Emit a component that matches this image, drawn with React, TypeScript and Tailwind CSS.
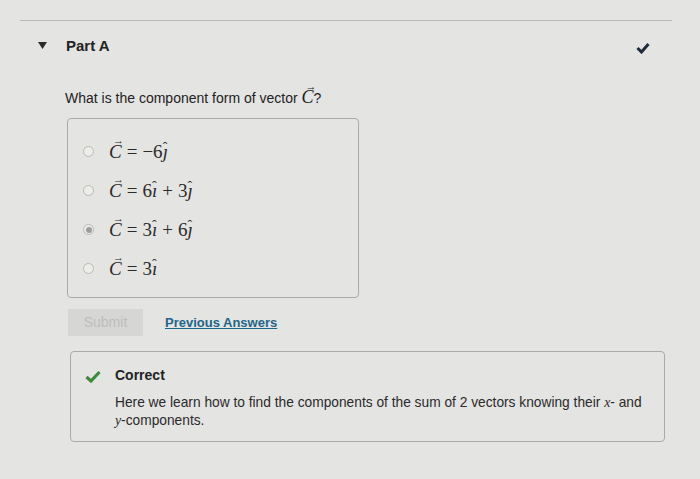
import React from "react";

const serif = { fontFamily: '"Liberation Serif", "DejaVu Serif", serif' };

// Vecteur C avec flèche au-dessus
function VecC() {
  return (
    <span className="relative inline-block italic leading-none">
      C
      <span className="absolute left-[4px] top-[-7px] text-[11px] not-italic leading-none">→</span>
    </span>
  );
}

function Hat({ ch }: { ch: string }) {
  return (
    <span className="relative inline-block italic leading-none">
      {ch}
      <span className="absolute left-[0px] top-[-1px] text-[14px] not-italic leading-none">ˆ</span>
    </span>
  );
}

function Op({ c }: { c: string }) {
  return <span className="mx-[5px]">{c}</span>;
}

function Radio({ checked }: { checked?: boolean }) {
  return (
    <span className="w-[11px] h-[11px] rounded-full border border-[#b9b9b7] bg-[#ecece9] flex items-center justify-center shrink-0">
      {checked && <span className="w-[6px] h-[6px] rounded-full bg-[#9d9d9b]" />}
    </span>
  );
}

const options: { checked?: boolean; expr: React.ReactNode }[] = [
  { expr: <><Op c="=" />−6<Hat ch="ȷ" /></> },
  { expr: <><Op c="=" />6<Hat ch="ı" /><Op c="+" />3<Hat ch="ȷ" /></> },
  { checked: true, expr: <><Op c="=" />3<Hat ch="ı" /><Op c="+" />6<Hat ch="ȷ" /></> },
  { expr: <><Op c="=" />3<Hat ch="ı" /></> },
];

export default function App() {
  return (
    <div
      className="w-[700px] h-[479px] bg-[#e4e4e2] text-[#222] overflow-hidden pt-[20px]"
      style={{ fontFamily: '"Liberation Sans", Arial, sans-serif' }}
    >
      <div className="ml-[20px] w-[652px] border-t border-[#b9b9b7]">
        {/* En-tête */}
        <div className="flex items-center h-[20px] mt-[15px]">
          <svg width="9" height="7" viewBox="0 0 9 7" className="ml-[18px] mt-[-2px]">
            <polygon points="0,0 9,0 4.5,7" fill="#2b2b2b" />
          </svg>
          <span className="ml-[19px] text-[15px] font-bold">Part A</span>
          <svg width="14" height="12" viewBox="0 0 14 12" className="ml-auto mr-[22px] mt-[3px]">
            <polyline points="1.5,6 5.5,10 12.5,2" fill="none" stroke="#1f2b3d" strokeWidth="3" />
          </svg>
        </div>
      </div>

      <div className="ml-[65px] mt-[32px] h-[20px] text-[14px] leading-[20px]">
        What is the component form of vector{" "}
        <span className="text-[18px] leading-none" style={serif}><VecC /></span>?
      </div>

      {/* Choix */}
      <div className="ml-[67px] mt-[10px] w-[292px] h-[180px] border border-[#a9a9a7] rounded-[4px] pt-[13px]">
        {options.map((o, i) => (
          <div key={i} className="flex items-center h-[39px] pl-[15px]">
            <Radio checked={o.checked} />
            <span className="ml-[15px] text-[19px] text-[#2a2a2a] whitespace-nowrap leading-none" style={serif}>
              <VecC />
              {o.expr}
            </span>
          </div>
        ))}
      </div>

      {/* Boutons */}
      <div className="flex items-center ml-[68px] mt-[11px]">
        <div className="w-[75px] h-[27px] bg-[#d6d6d4] text-[#bdbdbb] text-[14px] flex items-center justify-center">
          Submit
        </div>
        <a className="ml-[22px] text-[13px] font-bold text-[#1d6689] underline">Previous Answers</a>
      </div>

      {/* Résultat */}
      <div className="ml-[70px] mt-[15px] w-[595px] h-[91px] border border-[#a9a9a7] rounded-[4px] pt-[13px] pl-[14px] pr-[12px] flex">
        <svg width="16" height="13" viewBox="0 0 16 13" className="mt-[5px] shrink-0">
          <polyline points="1.5,7 6,11 14.5,2" fill="none" stroke="#3d8b3d" strokeWidth="3.2" />
        </svg>
        <div className="ml-[14px]">
          <div className="text-[14px] font-bold leading-[20px]">Correct</div>
          <p className="mt-[9px] text-[13.75px] leading-[18px] text-[#2a2a2a]">
            Here we learn how to find the components of the sum of 2 vectors knowing their{" "}
            <span className="italic" style={serif}>x</span>- and{" "}
            <span className="italic" style={serif}>y</span>-components.
          </p>
        </div>
      </div>
    </div>
  );
}
